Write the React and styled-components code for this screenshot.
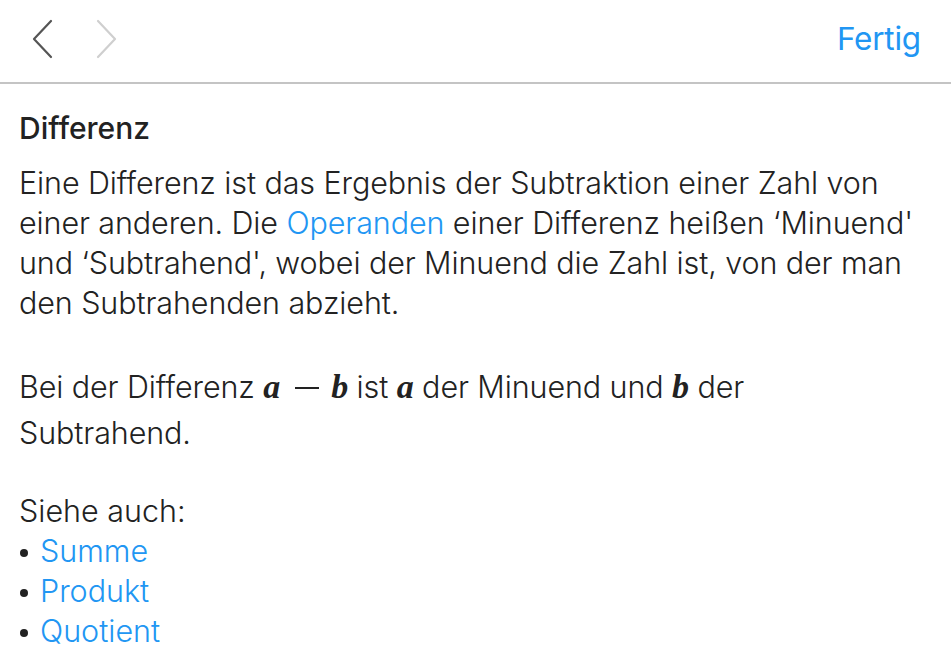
import React from "react";
import styled, { createGlobalStyle } from "styled-components";

const Global = createGlobalStyle`
  html, body {
    margin: 0;
    padding: 0;
    background: #fff;
  }
  body {
    font-family: Inter, "Noto Sans", sans-serif;
    color: #222;
  }
`;

const Page = styled.div`
  width: 951px;
  min-height: 665px;
  background: #fff;
`;

const Toolbar = styled.div`
  height: 84px;
  display: flex;
  align-items: center;
  justify-content: space-between;
  padding: 0 30px 4px 28px;
  border-bottom: 2px solid #c4c4c4;
  box-sizing: border-box;
`;

const NavGroup = styled.div`
  display: flex;
  align-items: center;
  gap: 36px;
`;

const NavButton = styled.button`
  border: none;
  background: none;
  padding: 0;
  width: 28px;
  height: 42px;
  display: flex;
  align-items: center;
  justify-content: center;
  color: ${(p) => (p.$disabled ? "#cfcfcf" : "#555")};
`;

const Done = styled.button`
  border: none;
  background: none;
  padding: 0 0 2px;
  font-family: Inter, sans-serif;
  font-size: 31.5px;
  font-weight: 400;
  letter-spacing: -0.2px;
  color: #2196f3;
`;

const Content = styled.div`
  padding: 26px 19px 0;
`;

const Title = styled.h1`
  margin: 0 0 17px;
  font-size: 30px;
  line-height: 36px;
  font-weight: 500;
  color: #222;
`;

const Para = styled.p`
  margin: 0 0 41px;
  max-width: 895px;
  font-size: 30.5px;
  line-height: 40px;
  font-weight: 300;
  letter-spacing: -0.1px;
  color: #222;
`;

const MathPara = styled(Para)`
  line-height: 46px;
  margin-bottom: 35px;
`;

const Link = styled.a`
  color: #2196f3;
  text-decoration: none;
`;

const MathVar = styled.i`
  font-family: "Liberation Serif", "DejaVu Serif", serif;
  font-style: italic;
  font-weight: 700;
  font-size: 34px;
`;

const MathOp = styled.span`
  display: inline-block;
  width: 24px;
  height: 2px;
  background: #222;
  vertical-align: middle;
  margin: 0 12px 0 15px;
  position: relative;
  top: -2px;
`;

const SeeAlso = styled.div`
  font-size: 30.5px;
  line-height: 40px;
  font-weight: 300;
`;

const List = styled.ul`
  list-style: none;
  margin: 0;
  padding: 0;
`;

const Item = styled.li`
  font-size: 30.5px;
  line-height: 40px;
  font-weight: 300;
  display: flex;
  align-items: center;
  &::before {
    content: "";
    width: 8px;
    height: 8px;
    border-radius: 50%;
    background: #222;
    margin: 4px 12px 0 1px;
  }
`;

function Chevron({ dir }) {
  const d = dir === "left" ? "M20 2 L3 20 L20 38" : "M3 2 L20 20 L3 38";
  return (
    <svg width="23" height="40" viewBox="0 0 23 40" fill="none">
      <path d={d} stroke="currentColor" strokeWidth="2.2" strokeLinecap="round" strokeLinejoin="round" />
    </svg>
  );
}

export default function App() {
  return (
    <Page>
      <Global />
      <Toolbar>
        <NavGroup>
          <NavButton>
            <Chevron dir="left" />
          </NavButton>
          <NavButton $disabled>
            <Chevron dir="right" />
          </NavButton>
        </NavGroup>
        <Done>Fertig</Done>
      </Toolbar>
      <Content>
        <Title>Differenz</Title>
        <Para>
          Eine Differenz ist das Ergebnis der Subtraktion einer Zahl von einer anderen. Die{" "}
          <Link href="#">Operanden</Link> einer Differenz heißen ‘Minuend' und ‘Subtrahend', wobei
          der Minuend die Zahl ist, von der man den Subtrahenden abzieht.
        </Para>
        <MathPara>
          Bei der Differenz <MathVar>a</MathVar>
          <MathOp />
          <MathVar>b</MathVar> ist <MathVar>a</MathVar> der Minuend und <MathVar>b</MathVar> der
          <br />
          Subtrahend.
        </MathPara>
        <SeeAlso>Siehe auch:</SeeAlso>
        <List>
          <Item>
            <Link href="#">Summe</Link>
          </Item>
          <Item>
            <Link href="#">Produkt</Link>
          </Item>
          <Item>
            <Link href="#">Quotient</Link>
          </Item>
        </List>
      </Content>
    </Page>
  );
}
